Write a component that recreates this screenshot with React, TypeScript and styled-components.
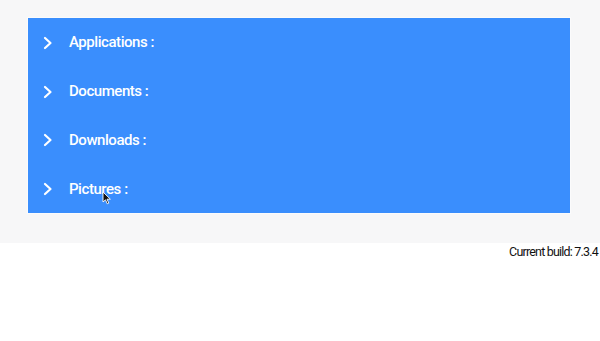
import React from 'react';
import styled, { createGlobalStyle } from 'styled-components';

const GlobalStyle = createGlobalStyle`
  html, body {
    margin: 0;
    padding: 0;
    background: #ffffff;
    font-family: Roboto, "Liberation Sans", Arial, sans-serif;
  }
`;

const folders = ['Applications :', 'Documents :', 'Downloads :', 'Pictures :'];

const Chevron = () => (
    <svg width="12" height="14" viewBox="0 0 12 14" fill="none">
        <path d="M3 2 L8.5 7 L3 12" stroke="#ffffff" strokeWidth="2.2" strokeLinecap="round" strokeLinejoin="round" />
    </svg>
);

const Cursor = () => (
    <svg width="10" height="14" viewBox="0 0 10 14">
        <path d="M1 1 L1 11 L3.5 8.8 L5.3 12.8 L6.8 12.1 L5 8.2 L8.4 8.2 Z" fill="#111" stroke="#fff" strokeWidth="0.9" />
    </svg>
);

const App = () => {
    return (
        <>
            <GlobalStyle />
            <Page>
                <Panel>
                    {folders.map((f, i) => (
                        <Row key={f}>
                            <IconBox><Chevron /></IconBox>
                            <Label>{f}</Label>
                            {i === 3 && <Pointer><Cursor /></Pointer>}
                        </Row>
                    ))}
                </Panel>
            </Page>
            <Footer>Current build: 7.3.4</Footer>
        </>
    );
};
export default App;

const Page = styled.div`
    background: #f7f7f8;
    padding: 18px 30px 30px 28px;
    height: 243px;
    box-sizing: border-box;
`;

const Panel = styled.div`
    background: #3a8efd;
    display: flex;
    flex-direction: column;
    box-shadow: 0 0 0 1px rgba(255, 255, 255, 0.5);
`;

const Row = styled.div`
    position: relative;
    display: flex;
    align-items: center;
    height: 48.75px;
`;

const IconBox = styled.span`
    display: flex;
    width: 12px;
    margin-left: 14px;
    margin-right: 15px;
    margin-top: 1px;
`;

const Label = styled.span`
    color: #ffffff;
    font-size: 15px;
    font-weight: 500;
    letter-spacing: -0.45px;
`;

const Pointer = styled.span`
    position: absolute;
    left: 74px;
    top: 27px;
    display: flex;
`;

const Footer = styled.div`
    text-align: right;
    padding-right: 2px;
    font-size: 12.5px;
    line-height: 16px;
    letter-spacing: -0.8px;
    color: #111111;
    position: relative;
    top: 1px;
`;
